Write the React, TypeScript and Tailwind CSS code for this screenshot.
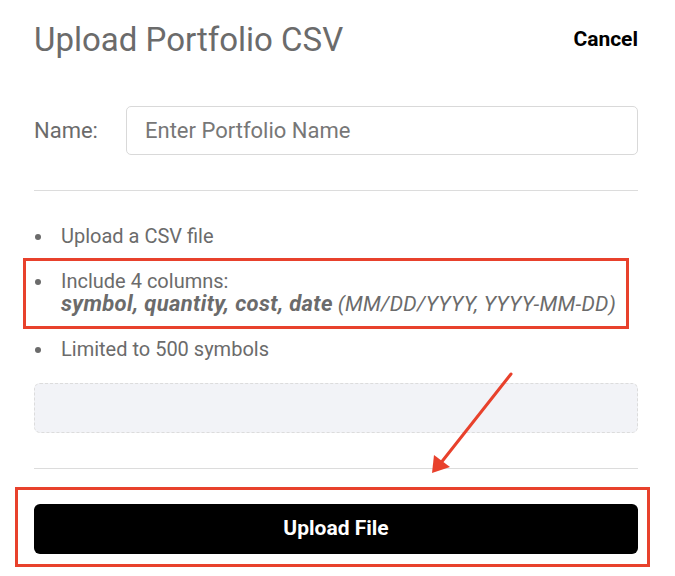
import React from 'react';

const font = { fontFamily: 'Roboto, "Liberation Sans", Arial, sans-serif' };

function Bullet({ children, highlight }: { children: React.ReactNode; highlight?: boolean }) {
  return (
    <li className="relative flex items-start text-[20px] leading-[23px] text-[#6b6b6b]">
      <span className="mt-[9px] ml-[1px] h-[6px] w-[6px] shrink-0 rounded-full bg-[#6b6b6b]" />
      <div className="ml-[20px]">{children}</div>
      {highlight && (
        <span className="pointer-events-none absolute -left-[11px] -top-[12px] -bottom-[13px] right-[9px] border-[3px] border-[#e8412c]" />
      )}
    </li>
  );
}

export default function App() {
  return (
    <div className="relative min-h-[576px] w-[675px] bg-white pl-[34px] pr-[37px]" style={font}>
      <div className="flex items-center justify-between pt-[20px]">
        <h1 className="text-[33px] leading-[40px] text-[#6b6b6b]">Upload Portfolio CSV</h1>
        <button className="text-[21px] font-bold text-black">Cancel</button>
      </div>

      <div className="mt-[46px] flex items-center">
        <label className="w-[92px] text-[22px] text-[#6b6b6b]">Name:</label>
        <input
          placeholder="Enter Portfolio Name"
          className="h-[49px] flex-1 rounded-[5px] border border-[#d9d9d9] px-[18px] text-[22px] text-[#333] outline-none placeholder:text-[#777]"
        />
      </div>

      <div className="mt-[35px] border-t border-[#dcdcdc]" />

      <ul className="mt-[34px] flex flex-col gap-[22px]">
        <Bullet>Upload a CSV file</Bullet>
        <Bullet highlight>
          Include 4 columns:
          <br />
          <span className="text-[22px] leading-[18px] font-bold italic tracking-[0.35px]">symbol, quantity, cost, date</span>{' '}
          <span className="text-[21px] leading-[18px] italic tracking-[0.25px]">(MM/DD/YYYY, YYYY-MM-DD)</span>
        </Bullet>
        <Bullet>Limited to 500 symbols</Bullet>
      </ul>

      <div className="mt-[22px] h-[50px] rounded-[6px] border-[1.5px] border-dashed border-[#dcdcdc] bg-[#f2f3f7]" />

      <div className="mt-[35px] border-t border-[#dcdcdc]" />

      <div className="relative mt-[35px]">
        <button className="flex h-[50px] w-full items-center justify-center rounded-[6px] bg-black text-[21px] font-bold text-white">
          Upload File
        </button>
        <span className="pointer-events-none absolute -left-[19px] -right-[12px] -top-[17px] -bottom-[13px] border-[3px] border-[#e8412c]" />
      </div>

      <svg className="pointer-events-none absolute left-0 top-0" width="675" height="576" viewBox="0 0 675 576">
        <line x1="511" y1="374" x2="440" y2="464" stroke="#e8412c" strokeWidth="3" strokeLinecap="round" />
        <polygon points="432,473 434,455 450,467" fill="#e8412c" />
      </svg>
    </div>
  );
}
